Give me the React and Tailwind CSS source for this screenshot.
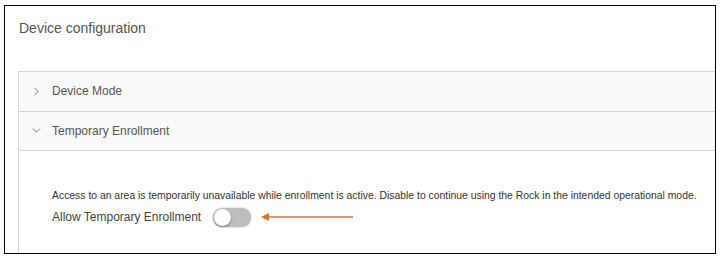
import { ChevronRight, ChevronDown } from "lucide-react";

function AccordionHeader({ open, title }) {
  const Icon = open ? ChevronDown : ChevronRight;
  return (
    <div className="flex h-[39.5px] items-center gap-[9px] border-b border-[#d4d4d4] bg-[#fafafa] pl-[11px] text-[12px] text-[#555]">
      <Icon size={13} strokeWidth={1.4} className="text-[#555]" />
      <span>{title}</span>
    </div>
  );
}

export default function App() {
  return (
    <div
      className="h-[260px] w-[721px] bg-white pl-[4px] pt-[5px]"
      style={{ fontFamily: '"Liberation Sans", Arial, sans-serif' }}
    >
      <div className="h-[249px] w-[712px] overflow-hidden border border-black">
        <div className="px-[14px] pt-[13px] text-[14px] leading-[18px] text-[#555]">Device configuration</div>
        <div className="ml-[13px] mt-[34px] h-full border-l border-t border-[#d4d4d4]">
          <AccordionHeader title="Device Mode" />
          <AccordionHeader open title="Temporary Enrollment" />
          <div className="pl-[33px] pt-[37px] text-[#333]">
            <p className="whitespace-nowrap text-[10.4px]">
              Access to an area is temporarily unavailable while enrollment is active. Disable to continue using the Rock in the intended operational mode.
            </p>
            <div className="mt-[4px] flex items-center">
              <span className="text-[12px] text-[#444]">Allow Temporary Enrollment</span>
              <button
                type="button"
                className="ml-[12px] flex h-[19px] w-[38px] items-center rounded-full bg-[#bdbdbd] p-[1px] shadow-[0_0_2px_rgba(0,0,0,0.35)]"
                aria-label="Allow Temporary Enrollment"
              >
                <span className="h-[17px] w-[17px] rounded-full bg-white shadow-[0_1px_2px_rgba(0,0,0,0.4)]" />
              </button>
              <svg width="96" height="10" viewBox="0 0 96 10" className="ml-[10px]">
                <path d="M0 5 L8 1 L8 9 Z" fill="#d5782c" />
                <line x1="6" y1="5" x2="92" y2="5" stroke="#d5782c" strokeWidth="1.6" />
              </svg>
            </div>
          </div>
        </div>
      </div>
    </div>
  );
}
